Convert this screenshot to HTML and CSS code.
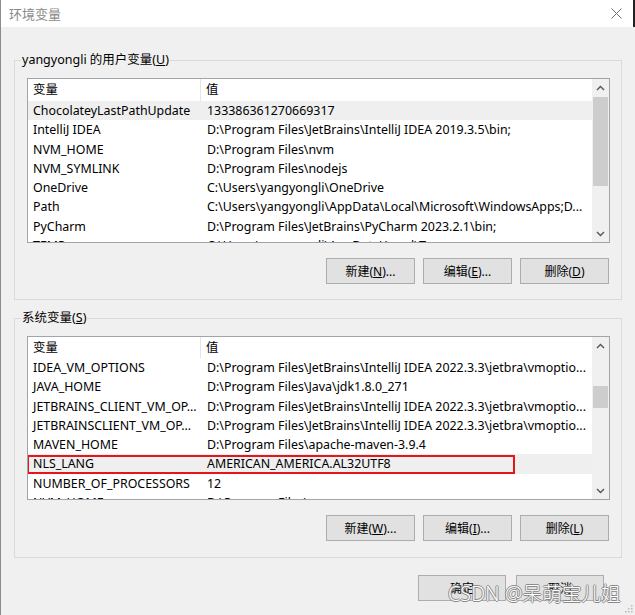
FILE: index.html
```html
<!DOCTYPE html>
<html lang="zh-CN">
<head>
<meta charset="utf-8">
<title>环境变量</title>
<link rel="stylesheet" href="styles.css">
</head>
<body>
<div class="window">
  <div class="titlebar">
    <span class="title">环境变量</span>
    <svg class="close" width="11" height="11" viewBox="0 0 11 11"><path d="M0.5 0.5 L10.5 10.5 M10.5 0.5 L0.5 10.5" stroke="#6e6e6e" stroke-width="1" fill="none"/></svg>
    <span class="edge"></span>
  </div>
  <div class="body">
    <section class="group">
      <div class="legend">yangyongli 的用户变量(<u>U</u>)</div>
      <div class="table t-user">
        <div class="list">
          <div class="head"><div class="c1">变量</div><div class="c2">值</div></div>
          <div class="row sel"><div class="c1">ChocolateyLastPathUpdate</div><div class="c2">133386361270669317</div></div>
          <div class="row"><div class="c1">IntelliJ IDEA</div><div class="c2">D:\Program Files\JetBrains\IntelliJ IDEA 2019.3.5\bin;</div></div>
          <div class="row"><div class="c1">NVM_HOME</div><div class="c2">D:\Program Files\nvm</div></div>
          <div class="row"><div class="c1">NVM_SYMLINK</div><div class="c2">D:\Program Files\nodejs</div></div>
          <div class="row"><div class="c1">OneDrive</div><div class="c2">C:\Users\yangyongli\OneDrive</div></div>
          <div class="row"><div class="c1">Path</div><div class="c2">C:\Users\yangyongli\AppData\Local\Microsoft\WindowsApps;D...</div></div>
          <div class="row"><div class="c1">PyCharm</div><div class="c2">D:\Program Files\JetBrains\PyCharm 2023.2.1\bin;</div></div>
          <div class="row"><div class="c1">TEMP</div><div class="c2">C:\Users\yangyongli\AppData\Local\Temp</div></div>
        </div>
        <div class="scroll">
          <div class="arrow"><svg width="9" height="6" viewBox="0 0 9 6"><path d="M1 5 L4.5 1.5 L8 5" stroke="#555" stroke-width="1.4" fill="none"/></svg></div>
          <div class="track"><div class="thumb th-user"></div></div>
          <div class="arrow"><svg width="9" height="6" viewBox="0 0 9 6"><path d="M1 1 L4.5 4.5 L8 1" stroke="#555" stroke-width="1.4" fill="none"/></svg></div>
        </div>
      </div>
      <div class="buttons">
        <button class="btn">新建(<u>N</u>)...</button>
        <button class="btn">编辑(<u>E</u>)...</button>
        <button class="btn">删除(<u>D</u>)</button>
      </div>
    </section>

    <section class="group g-sys">
      <div class="legend">系统变量(<u>S</u>)</div>
      <div class="table t-sys">
        <div class="list">
          <div class="head"><div class="c1">变量</div><div class="c2">值</div></div>
          <div class="row"><div class="c1">IDEA_VM_OPTIONS</div><div class="c2">D:\Program Files\JetBrains\IntelliJ IDEA 2022.3.3\jetbra\vmoptio...</div></div>
          <div class="row"><div class="c1">JAVA_HOME</div><div class="c2">D:\Program Files\Java\jdk1.8.0_271</div></div>
          <div class="row"><div class="c1">JETBRAINS_CLIENT_VM_OP...</div><div class="c2">D:\Program Files\JetBrains\IntelliJ IDEA 2022.3.3\jetbra\vmoptio...</div></div>
          <div class="row"><div class="c1">JETBRAINSCLIENT_VM_OP...</div><div class="c2">D:\Program Files\JetBrains\IntelliJ IDEA 2022.3.3\jetbra\vmoptio...</div></div>
          <div class="row"><div class="c1">MAVEN_HOME</div><div class="c2">D:\Program Files\apache-maven-3.9.4</div></div>
          <div class="row sel marked"><div class="c1">NLS_LANG</div><div class="c2">AMERICAN_AMERICA.AL32UTF8</div><span class="redbox"></span></div>
          <div class="row"><div class="c1">NUMBER_OF_PROCESSORS</div><div class="c2">12</div></div>
          <div class="row"><div class="c1">NVM_HOME</div><div class="c2">D:\Program Files\nvm</div></div>
        </div>
        <div class="scroll">
          <div class="arrow"><svg width="9" height="6" viewBox="0 0 9 6"><path d="M1 5 L4.5 1.5 L8 5" stroke="#555" stroke-width="1.4" fill="none"/></svg></div>
          <div class="track"><div class="thumb th-sys"></div></div>
          <div class="arrow"><svg width="9" height="6" viewBox="0 0 9 6"><path d="M1 1 L4.5 4.5 L8 1" stroke="#555" stroke-width="1.4" fill="none"/></svg></div>
        </div>
      </div>
      <div class="buttons">
        <button class="btn">新建(<u>W</u>)...</button>
        <button class="btn">编辑(<u>I</u>)...</button>
        <button class="btn">删除(<u>L</u>)</button>
      </div>
    </section>

    <div class="footer">
      <button class="btn btn-f">确定</button>
      <button class="btn btn-f">取消</button>
    </div>
  </div>
  <div class="watermark">CSDN @呆萌宝儿姐</div>
  <svg class="grip" width="9" height="9" viewBox="0 0 9 9">
    <rect x="7" y="1" width="1.5" height="1.5" fill="#b8b8b8"/>
    <rect x="4" y="4" width="1.5" height="1.5" fill="#b8b8b8"/>
    <rect x="7" y="4" width="1.5" height="1.5" fill="#b8b8b8"/>
    <rect x="1" y="7" width="1.5" height="1.5" fill="#b8b8b8"/>
    <rect x="4" y="7" width="1.5" height="1.5" fill="#b8b8b8"/>
    <rect x="7" y="7" width="1.5" height="1.5" fill="#b8b8b8"/>
  </svg>
</div>
</body>
</html>
```

FILE: styles.css
```css
* { box-sizing: border-box; }
html, body { margin: 0; padding: 0; }
body {
  width: 635px;
  height: 615px;
  overflow: hidden;
  background: #f0f0f0;
  font-family: "Noto Sans", "Noto Sans CJK SC", sans-serif;
  font-size: 12.4px;
  color: #000;
}
.window {
  position: relative;
  width: 635px;
  height: 615px;
  border-left: 1px solid #8c8c8c;
  background: #f0f0f0;
}
.titlebar {
  height: 27px;
  background: #fff;
  display: flex;
  align-items: center;
  padding-left: 8px;
}
.title {
  color: #8a8a8a;
  font-size: 13px;
  flex: 1;
}
.close { margin-right: 11px; margin-top: -1px; }
.edge {
  width: 2px;
  align-self: stretch;
  background: #222;
}
.body {
  padding: 33px 13px 0 13px;
}
.group {
  border: 1px solid #dadada;
  padding: 0 11px 15px 12px;
}
.g-sys { margin-top: 18px; padding-bottom: 16px; }
.legend {
  width: fit-content;
  height: 16px;
  line-height: 16px;
  margin: -9px 0 10px -6px;
  padding: 0 1px;
  background: #f0f0f0;
  font-size: 12.5px;
}
.table {
  display: flex;
  border: 1px solid #a0a4ab;
  background: #fff;
}
.t-user { height: 165px; }
.t-sys { height: 164px; }
.list {
  flex: 1;
  overflow: hidden;
  position: relative;
}
.head, .row {
  display: flex;
  white-space: nowrap;
}
.head { height: 22px; line-height: 22px; }
.t-sys .head { height: 21px; line-height: 21px; }
.row { height: 19.3px; line-height: 19.3px; position: relative; }
.sel { background: #efefef; }
.c1 {
  width: 173px;
  padding-left: 5px;
  overflow: hidden;
}
.c2 {
  flex: 1;
  padding-left: 6px;
  overflow: hidden;
}
.head .c1 { border-right: 1px solid #e5e5e5; }
.head .c2 { padding-left: 5px; }
.redbox {
  position: absolute;
  left: -1px;
  top: 1px;
  width: 488px;
  height: 19px;
  border: 2px solid #e8141c;
}
.scroll {
  width: 17px;
  background: #f0f0f0;
  display: flex;
  flex-direction: column;
}
.arrow {
  height: 17px;
  display: flex;
  align-items: center;
  justify-content: center;
}
.track { flex: 1; padding: 0 1px; }
.thumb { background: #cdcdcd; }
.th-user { margin-top: 1px; height: 89px; }
.th-sys { margin-top: 32px; height: 22px; }
.buttons {
  display: flex;
  justify-content: flex-end;
  gap: 8px;
  margin-top: 15px;
  margin-right: 1px;
}
.btn {
  width: 89px;
  height: 26px;
  background: #e1e1e1;
  border: 1px solid #adadad;
  font-family: inherit;
  font-size: 12px;
  color: #000;
  padding: 0;
}
.footer {
  display: flex;
  justify-content: flex-end;
  gap: 10px;
  margin-top: 17px;
  margin-right: 18px;
}
.btn-f { width: 88px; }
.watermark {
  position: absolute;
  left: 447px;
  top: 578px;
  font-family: "Noto Sans", "Noto Sans CJK SC", sans-serif;
  font-size: 19.5px;
  font-weight: 300;
  color: #fff;
  text-shadow: 1px 0 0 #8a8a8a, -1px 0 0 #8a8a8a, 0 1px 0 #8a8a8a, 0 -1px 0 #8a8a8a;
  white-space: nowrap;
  letter-spacing: 0.2px;
}
.grip {
  position: absolute;
  right: 2px;
  bottom: 2px;
}
```
